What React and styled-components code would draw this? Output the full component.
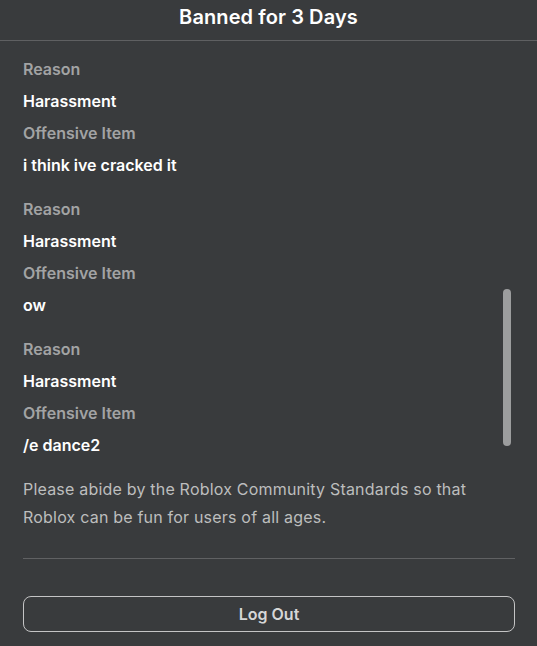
import React from "react";
import styled, { createGlobalStyle } from "styled-components";

const GlobalStyle = createGlobalStyle`
  html, body {
    margin: 0;
    padding: 0;
    background: #393b3d;
  }
  body {
    font-family: Inter, "Noto Sans", sans-serif;
    -webkit-font-smoothing: antialiased;
  }
`;

const bans = [
  { reason: "Harassment", item: "i think ive cracked it" },
  { reason: "Harassment", item: "ow" },
  { reason: "Harassment", item: "/e dance2" },
];

const App = () => {
  return (
    <>
      <GlobalStyle />
      <Modal>
        <Header>Banned for 3 Days</Header>
        <Body>
          <ScrollArea>
            {bans.map((ban, i) => (
              <Group key={i}>
                <Row $muted>Reason</Row>
                <Row>{ban.reason}</Row>
                <Row $muted>Offensive Item</Row>
                <Row>{ban.item}</Row>
              </Group>
            ))}
            <Thumb />
          </ScrollArea>
          <Notice>
            Please abide by the Roblox Community Standards so that Roblox can be
            fun for users of all ages.
          </Notice>
          <Divider />
          <Button type="button">Log Out</Button>
        </Body>
      </Modal>
    </>
  );
};

const Modal = styled.div`
  width: 537px;
  height: 646px;
  display: flex;
  flex-direction: column;
  color: #fff;
`;

const Header = styled.div`
  height: 40px;
  line-height: 35px;
  border-bottom: 1px solid #5f6062;
  text-align: center;
  font-size: 20px;
  font-weight: 600;
  letter-spacing: 0.1px;
  color: #fff;
`;

const Body = styled.div`
  display: flex;
  flex-direction: column;
  padding: 12px 22px 0 23px;
`;

const ScrollArea = styled.div`
  position: relative;
  display: flex;
  flex-direction: column;
  gap: 12px;
`;

const Group = styled.div`
  display: flex;
  flex-direction: column;
`;

const Row = styled.div`
  height: 32px;
  line-height: 32px;
  font-size: 16px;
  font-weight: 600;
  color: ${(p) => (p.$muted ? "#a2a3a4" : "#ffffff")};
`;

const Thumb = styled.div`
  position: absolute;
  right: 4px;
  top: 236px;
  width: 8px;
  height: 157px;
  border-radius: 4px;
  background: #9c9d9e;
`;

const Notice = styled.p`
  margin: 14px 0 0;
  max-width: 450px;
  font-size: 16px;
  line-height: 28px;
  letter-spacing: 0.2px;
  color: #bdbebe;
  font-weight: 400;
`;

const Divider = styled.hr`
  margin: 27px 0 0;
  border: none;
  border-top: 1px solid #606163;
`;

const Button = styled.button`
  margin-top: 37px;
  height: 36px;
  border: 1px solid #c4c4c5;
  border-radius: 8px;
  background: transparent;
  color: #d6d6d6;
  font-family: inherit;
  font-size: 16px;
  font-weight: 600;
  cursor: pointer;
`;

export default App;
